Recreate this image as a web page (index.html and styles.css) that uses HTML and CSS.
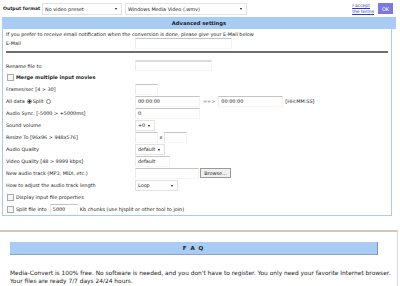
FILE: index.html
```html
<!DOCTYPE html>
<html>
<head>
<meta charset="utf-8">
<link rel="stylesheet" href="styles.css">
</head>
<body>
<div class="top">
  <span class="of-label">Output format</span>
  <span class="sel sel1">No video preset<i class="arr"></i></span>
  <span class="sel sel2">Windows Media Video (.wmv)<i class="arr"></i></span>
  <span class="spacer"></span>
  <a class="terms" href="#">I accept<br>the terms</a>
  <span class="ok">OK</span>
</div>

<div class="panel">
  <div class="phead">Advanced settings</div>
  <div class="pbody">
    <div class="intro">If you prefer to receive email notification when the conversion is done, please give your E-Mail below</div>
    <div class="row email"><span class="lbl">E-Mail</span><span class="inp w97"></span></div>
    <div class="hr"></div>
    <div class="row r11"><span class="lbl">Rename file to</span><span class="inp w77"></span></div>
    <div class="row"><span class="cb"></span><b class="cbt">Merge multiple input movies</b></div>
    <div class="row"><span class="lbl">Frames/sec [4 &gt; 30]</span><span class="inp w23"></span></div>
    <div class="row"><span class="lbl">All data <span class="rad on"></span> Split <span class="rad"></span></span><span class="inp w65">00:00:00</span><span class="arrow">==&gt;</span><span class="inp w65">00:00:00</span><span class="hint">[HH:MM:SS]</span></div>
    <div class="row"><span class="lbl">Audio Sync. [-5000 &gt; +5000ms]</span><span class="inp w65">0</span></div>
    <div class="row"><span class="lbl">Sound volume</span><span class="sel w20">+0<i class="arr"></i></span></div>
    <div class="row"><span class="lbl">Resize To [96x96 &gt; 948x576]</span><span class="inp w23"></span><span class="x">x</span><span class="inp w23"></span></div>
    <div class="row"><span class="lbl">Audio Quality</span><span class="sel w30">default<i class="arr"></i></span></div>
    <div class="row"><span class="lbl">Video Quality [48 &gt; 9999 kbps]</span><span class="inp w35">default</span></div>
    <div class="row"><span class="lbl">New audio track (MP3, MIDI, etc.)</span><span class="inp w64"></span><span class="btn">Browse...</span></div>
    <div class="row"><span class="lbl">How to adjust the audio track length</span><span class="sel w43">Loop<i class="arr"></i></span></div>
    <div class="row"><span class="cb"></span><span class="cbt">Display input file properties</span></div>
    <div class="row"><span class="cb"></span><span class="cbt">Split file into</span><span class="inp w27">5000</span><span class="cbt">Kb chunks (use hjsplit or other tool to join)</span></div>
  </div>
</div>

<div class="lower">
  <div class="faq">F A Q</div>
  <p class="free">Media-Convert is 100% free. No software is needed, and you don't have to register. You only need your favorite Internet browser.<br>Your files are ready 7/7 days 24/24 hours.</p>
</div>
</body>
</html>
```

FILE: styles.css
```css
html, body {
  margin: 0;
  padding: 0;
  background: #fff;
}
body {
  width: 400px;
  height: 286px;
  overflow: hidden;
  font-family: "DejaVu Sans", Verdana, sans-serif;
  font-size: 4.9px;
  color: #222;
}
.top {
  display: flex;
  align-items: center;
  height: 17px;
  padding-left: 3px;
  padding-right: 7px;
}
.of-label {
  font-weight: bold;
  width: 39px;
  font-size: 4.6px;
}
.sel {
  position: relative;
  display: inline-flex;
  align-items: center;
  box-sizing: border-box;
  height: 12px;
  padding-left: 2px;
  border: 1px solid #e2e2e2;
  background: #fff;
}
.sel1 { width: 80px; margin-right: 3px; }
.sel2 { width: 122px; }
.arr {
  position: absolute;
  right: 4px;
  top: 4px;
  width: 0;
  height: 0;
  border-left: 1.5px solid transparent;
  border-right: 1.5px solid transparent;
  border-top: 2px solid #111;
}
.spacer { flex: 1; }
.terms {
  color: #2a3dbf;
  font-size: 4.5px;
  line-height: 5.5px;
  margin-right: 4px;
}
.ok {
  display: inline-flex;
  align-items: center;
  justify-content: center;
  width: 15px;
  height: 11px;
  background: #7b78e0;
  color: #fff;
  font-size: 5px;
}
.panel {
  margin-left: 2px;
  width: 394px;
}
.phead {
  height: 12px;
  line-height: 12px;
  background: #a8ccf4;
  text-align: center;
  font-weight: bold;
  font-size: 5.2px;
  color: #1a1a2a;
}
.pbody {
  width: 390px;
  box-sizing: border-box;
  border: 1px solid #a9cbee;
  border-top: none;
  padding: 0 3px 0 3px;
}
.intro {
  height: 10px;
  line-height: 9px;
  padding-top: 1px;
  box-sizing: border-box;
  white-space: nowrap;
}
.row {
  display: flex;
  align-items: center;
  height: 12px;
  white-space: nowrap;
}
.row.r11 { height: 11px; }
.email { height: 12px; margin-top: -2px; }
.hr {
  height: 2px;
  background: #6e6e6e;
  margin: 2px 0 7px 0;
}
.lbl {
  width: 129px;
  flex: none;
  display: inline-flex;
  align-items: center;
}
.inp {
  box-sizing: border-box;
  height: 11px;
  display: inline-flex;
  align-items: center;
  padding-left: 2px;
  border-top: 1px solid #c4c4c4;
  border-left: 1px solid #ececec;
  border-right: 1px solid #f3f3f3;
  border-bottom: 1px solid #f6f6f6;
  background: #fff;
}
.w97 { width: 97px; }
.w77 { width: 77px; border-top: 2px solid #dcdcdc; }
.w23 { width: 23px; }
.w65 { width: 65px; }
.w64 { width: 64px; }
.w35 { width: 35px; }
.w27 { width: 28px; margin: 0 2px 0 3px; }
.w20 { width: 20px; height: 11px; }
.w30 { width: 30px; height: 11px; }
.w43 { width: 43px; height: 11px; }
.arrow { margin: 0 3px; color: #888; }
.hint { margin-left: 2px; }
.x { width: 4px; text-align: center; margin: 0 1px; }
.rad {
  display: inline-block;
  box-sizing: border-box;
  width: 5px;
  height: 5px;
  border-radius: 50%;
  border: 1px solid #888;
  margin: 0 1px 0 2px;
  background: #fff;
}
.rad.on {
  background: radial-gradient(circle, #333 0 1px, #fff 1.2px);
}
.cb {
  display: inline-block;
  box-sizing: border-box;
  width: 7px;
  height: 7px;
  border: 1px solid #aaa;
  background: #f5f5f5;
  margin: 0 2px 0 1px;
}
.cbt { white-space: nowrap; }
.btn {
  box-sizing: border-box;
  height: 10px;
  width: 31px;
  display: inline-flex;
  align-items: center;
  justify-content: center;
  border: 1px solid #999;
  background: #f0f0f0;
  margin-left: 1px;
}
.lower {
  margin-top: 14px;
  border-top: 2px solid #cfc8c0;
  border-right: 1px solid #ddd;
  width: 397px;
  height: 44px;
  padding-top: 10px;
  overflow: hidden;
}
.faq {
  margin-left: 10px;
  width: 368px;
  height: 13px;
  box-sizing: border-box;
  line-height: 12px;
  background: #a8ccf4;
  border-right: 1px solid #7f93b0;
  border-bottom: 1px solid #8fa3c0;
  text-align: center;
  font-weight: bold;
  font-size: 5.5px;
  letter-spacing: 1px;
  color: #222;
}
.free {
  margin: 14px 0 0 10px;
  font-size: 5.9px;
  line-height: 8px;
  color: #222;
  white-space: nowrap;
}
```
